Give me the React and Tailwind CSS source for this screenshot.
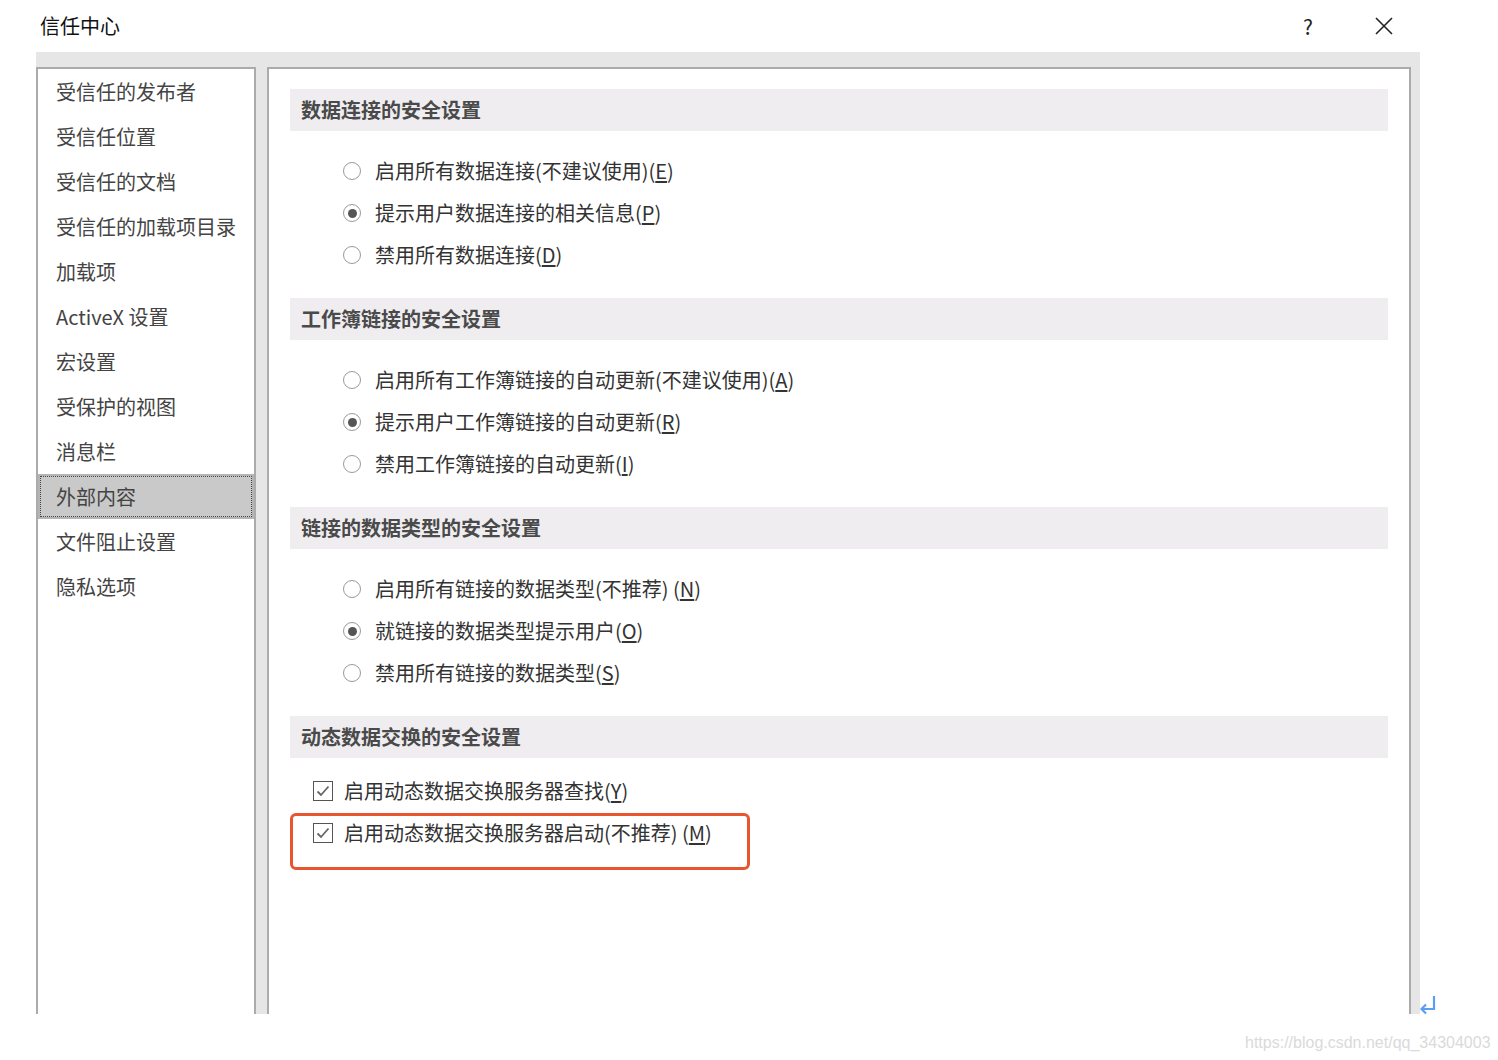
import React from "react";

const font = "font-['Noto_Sans_CJK_SC','Microsoft_YaHei',sans-serif]";

const navItems = [
  "受信任的发布者",
  "受信任位置",
  "受信任的文档",
  "受信任的加载项目录",
  "加载项",
  "ActiveX 设置",
  "宏设置",
  "受保护的视图",
  "消息栏",
  "外部内容",
  "文件阻止设置",
  "隐私选项",
];

const sections = [
  {
    title: "数据连接的安全设置",
    items: [
      { label: "启用所有数据连接(不建议使用)(", key: "E", tail: ")" },
      { label: "提示用户数据连接的相关信息(", key: "P", tail: ")", checked: true },
      { label: "禁用所有数据连接(", key: "D", tail: ")" },
    ],
  },
  {
    title: "工作簿链接的安全设置",
    items: [
      { label: "启用所有工作簿链接的自动更新(不建议使用)(", key: "A", tail: ")" },
      { label: "提示用户工作簿链接的自动更新(", key: "R", tail: ")", checked: true },
      { label: "禁用工作簿链接的自动更新(", key: "I", tail: ")" },
    ],
  },
  {
    title: "链接的数据类型的安全设置",
    items: [
      { label: "启用所有链接的数据类型(不推荐) (", key: "N", tail: ")" },
      { label: "就链接的数据类型提示用户(", key: "O", tail: ")", checked: true },
      { label: "禁用所有链接的数据类型(", key: "S", tail: ")" },
    ],
  },
];

function Radio({ checked }) {
  return (
    <span className="flex h-[18px] w-[18px] items-center justify-center rounded-full border border-[#9a9a9a] bg-white">
      {checked && <span className="h-[9px] w-[9px] rounded-full bg-[#555]" />}
    </span>
  );
}

function Checkbox() {
  return (
    <span className="flex h-[20px] w-[20px] items-center justify-center border-[1.5px] border-[#555] bg-white">
      <svg width="14" height="12" viewBox="0 0 14 12">
        <path d="M1.5 6.5 L5 10 L12.5 1.5" fill="none" stroke="#666" strokeWidth="1.8" />
      </svg>
    </span>
  );
}

function Label({ item }) {
  return (
    <span className="text-[20px] leading-none text-[#333]">
      {item.label}
      <span className="underline underline-offset-2">{item.key}</span>
      {item.tail}
    </span>
  );
}

function Header({ title }) {
  return (
    <div className="flex h-[42px] items-center bg-[#efedf0] px-[11px] text-[20px] font-bold text-[#4a4a4a]">
      {title}
    </div>
  );
}

export default function App() {
  return (
    <div className={`relative h-[1060px] w-[1498px] overflow-hidden bg-white ${font}`}>
      <div className="flex h-[52px] items-center pl-[40px]">
        <span className="text-[20px] leading-none text-[#111]">信任中心</span>
        <span className="ml-auto mr-[62px] text-[21px] leading-none text-[#222]">?</span>
        <svg className="mr-[105px]" width="18" height="18" viewBox="0 0 18 18">
          <path d="M1 1 L17 17 M17 1 L1 17" stroke="#222" strokeWidth="1.6" />
        </svg>
      </div>

      <div className="ml-[36px] flex h-[962px] w-[1384px] gap-[11px] bg-[#e6e6e6] pr-[9px] pt-[15px]">
        <div className="w-[220px] border-2 border-b-0 border-[#ababab] bg-white">
          {navItems.map((name) => {
            const active = name === "外部内容";
            return (
              <div
                key={name}
                className={`flex h-[45px] items-center ${active ? "bg-[#b4b4b4] p-[2px]" : "pl-[18px]"}`}
              >
                {active ? (
                  <div className="flex h-full w-full items-center border border-dotted border-[#444] bg-[#c9c9c9] pl-[15px] text-[20px] leading-none text-[#444]">
                    {name}
                  </div>
                ) : (
                  <span className="text-[20px] leading-none text-[#444]">{name}</span>
                )}
              </div>
            );
          })}
        </div>

        <div className="flex-1 border-2 border-b-0 border-[#ababab] bg-white px-[21px] pt-[20px]">
          {sections.map((s) => (
            <div key={s.title}>
              <Header title={s.title} />
              <div className="pb-[22px] pl-[53px] pt-[19px]">
                {s.items.map((it) => (
                  <div key={it.key} className="flex h-[42px] items-center gap-[14px]">
                    <Radio checked={it.checked} />
                    <Label item={it} />
                  </div>
                ))}
              </div>
            </div>
          ))}

          <Header title="动态数据交换的安全设置" />
          <div className="relative pl-[23px] pt-[12px]">
            <div className="flex h-[42px] items-center gap-[11px]">
              <Checkbox />
              <Label item={{ label: "启用动态数据交换服务器查找(", key: "Y", tail: ")" }} />
            </div>
            <div className="flex h-[42px] items-center gap-[11px]">
              <Checkbox />
              <Label item={{ label: "启用动态数据交换服务器启动(不推荐) (", key: "M", tail: ")" }} />
            </div>
            <div className="pointer-events-none absolute left-0 top-[55px] h-[57px] w-[460px] rounded-[6px] border-[3px] border-[#e8552e]" />
          </div>
        </div>
      </div>

      <svg className="absolute left-[1419px] top-[995px]" width="18" height="20" viewBox="0 0 18 20">
        <path d="M15 1 V14 H3 M7 9.5 L2.5 14 L7 18.5" fill="none" stroke="#5b9ff0" strokeWidth="2.2" />
      </svg>
      <div className="absolute left-[1245px] top-[1031px] font-['Liberation_Sans',sans-serif] text-[16px] text-[#dadada]">
        https://blog.csdn.net/qq_34304003
      </div>
    </div>
  );
}
